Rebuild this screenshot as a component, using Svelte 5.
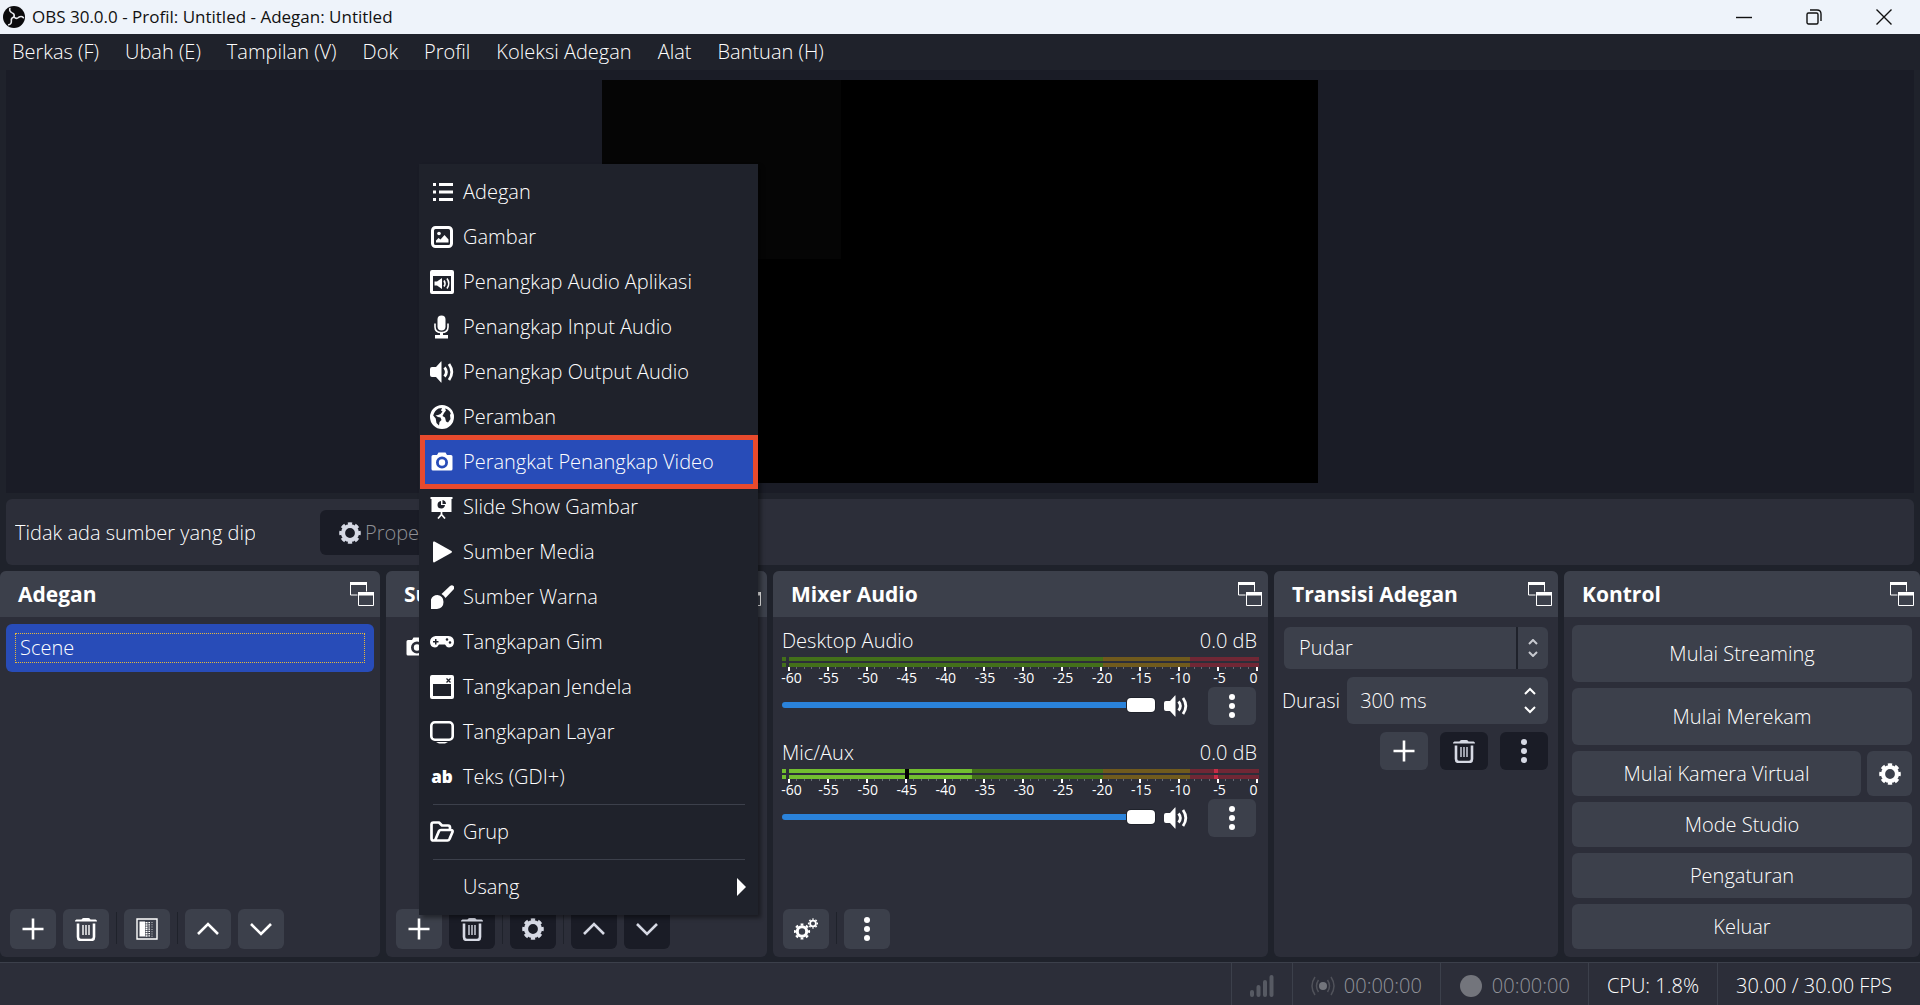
<script>
  const menus = ['Berkas (F)', 'Ubah (E)', 'Tampilan (V)', 'Dok', 'Profil', 'Koleksi Adegan', 'Alat', 'Bantuan (H)'];

  const icons = {
    plus: '<path d="M12 1.5v21M1.5 12h21" fill="none" stroke="currentColor" stroke-width="2.6"/>',
    trash: '<path d="M1 4.6C1 3 2 2.6 3.400 2.600H7.500Q8 1 9.500 1h5Q16 1 16.500 2.600h4.100C22 2.600 23 3 23 4.600z"/><path d="M4 6.500V20q0 3 3 3h10q3 0 3-3V6.500" fill="none" stroke="currentColor" stroke-width="2.600"/><path d="M9 8v10M12 8v10M15 8v10" stroke="currentColor" stroke-width="1.400"/>',
    gear: '<circle cx="12" cy="12" r="7" fill="none" stroke="currentColor" stroke-width="4.200"/><circle cx="12" cy="12" r="9.400" fill="none" stroke="currentColor" stroke-width="2.800" pathLength="16" stroke-dasharray="1.150 .850" stroke-dashoffset=".575"/>',
    gears: '<circle cx="8" cy="14.500" r="4.700" fill="none" stroke="currentColor" stroke-width="3"/><circle cx="8" cy="14.500" r="7" fill="none" stroke="currentColor" stroke-width="2.200" pathLength="16" stroke-dasharray="1 1" stroke-dashoffset=".5"/><circle cx="19" cy="6.500" r="2.900" fill="none" stroke="currentColor" stroke-width="1.800"/><circle cx="19" cy="6.500" r="4.400" fill="none" stroke="currentColor" stroke-width="1.400" pathLength="16" stroke-dasharray="1 1" stroke-dashoffset=".5"/>',
    up: '<path d="M2 17 12 7l10 10" fill="none" stroke="currentColor" stroke-width="2.600"/>',
    down: '<path d="M2 7l10 10L22 7" fill="none" stroke="currentColor" stroke-width="2.600"/>',
    dots: '<circle cx="12" cy="3" r="3"/><circle cx="12" cy="12" r="3"/><circle cx="12" cy="21" r="3"/>',
    filter: '<path d="M2 2h20v20H2z" fill="none" stroke="currentColor" stroke-width="1.400"/><path d="M4.500 4.500h5.500v15H4.500z"/><path d="M11.500 5v15" stroke="currentColor" stroke-width="2" stroke-dasharray="1.500 .7"/><path d="M14.200 5v15" stroke="currentColor" stroke-width="1.600" stroke-dasharray="1.200 1"/><path d="M17 5v15" stroke="currentColor" stroke-width="1.200" stroke-dasharray="1 1.300" opacity=".6"/>',
    float: '<path d="M7.500 13H.5V.5h16v9" fill="none" stroke="currentColor"/><path d="M0 0h17v3H0zM8 10h16v3.500H8z"/><path d="M8.500 10.500h15v13h-15z" fill="none" stroke="currentColor"/>',
    list: '<path d="M3 3h3v3H3zM3 10.500h3v3H3zM3 18h3v3H3zM9 3h14v3H9zM9 10.500h14v3H9zM9 18h14v3H9z"/>',
    image: '<rect x="2.500" y="2.500" width="19" height="19" rx="3" fill="none" stroke="currentColor" stroke-width="3"/><circle cx="9" cy="8.500" r="1.800"/><path d="M6 17.500v-2l2.500-2.500 2 1.500 4-4.500 4 4.500v3z"/>',
    appaudio: '<path fill-rule="evenodd" d="M2 0h20q2 0 2 2v20q0 2-2 2H2q-2 0-2-2V2q0-2 2-2zM3 6v15h18V6z"/><path d="M4.500 11.500H7l5-3.500v11l-5-3.500H4.500z"/><path d="M14 10.500q2 3 0 6M17 8.500q3.500 5 0 10" fill="none" stroke="currentColor" stroke-width="1.600"/>',
    mic: '<rect x="7.500" y=".5" width="8" height="15" rx="4"/><path d="M5 8.500V12q0 5.500 6.500 5.500T18 12V8.500" fill="none" stroke="currentColor" stroke-width="1.600"/><path d="M10 17.500h3V20h5v3.500H5V20h5z"/>',
    speaker: '<path d="M2 7h4l5-5.500q.5-.5.500.5v20q0 1-.5.500L6 17H2q-2 0-2-2V9q0-2 2-2z"/><path d="M14.500 7.500q3.800 4.500 0 9M19 4q5.600 8 0 16" fill="none" stroke="currentColor" stroke-width="2.800"/>',
    globe: '<path fill-rule="evenodd" d="M12 0a12 12 0 1 0 0 24 12 12 0 0 0 0-24zM8.500 3.500 12 3l-1 2.500 1.500 1-2 2.500L8 10l-2.500.5L8 12l2.500.5 1 2.500-2 2-.5 3.500L6.500 18l-.8-4.500-2.500-3Q4.500 5.500 8.500 3.500zM14 8l2-2.500-1-2q4 .8 5.800 5L20 10l.5 4-2.500 3.500-2-1-1-4-2.500-1.500z"/>',
    camera: '<path fill-rule="evenodd" d="M3 5h4l1.500-2.500h7L17 5h4q1.500 0 1.500 1.500V19q0 1.500-1.500 1.500H3Q1.500 20.500 1.500 19V6.500Q1.500 5 3 5zM12 6.500a6 6 0 1 0 0 12 6 6 0 0 0 0-12z"/><circle cx="12" cy="12.500" r="3.200"/>',
    slides: '<path fill-rule="evenodd" d="M.5 2h22v2h-1v13h-20V4h-1zM11 6q-3.500.5-3.500 4t4 3.500q3-.2 3.500-3.500h-4zM12.500 5v4H16q-.2-3.500-3.500-4z"/><path d="M11.500 17v2.500L8 23.500M11.500 19.500l3.500 4" fill="none" stroke="currentColor" stroke-width="1.700"/>',
    play: '<path d="M3 2.500q0-1.500 1.500-1l17 9.500q1 .8 0 1.800l-17 9.500Q3 23 3 21z"/>',
    brush: '<path d="M1 24v-9.500Q2.500 10 7.500 10q6 .8 6 7 0 6-6.500 7zM11.500 9 20 1q2-1.600 3.500 0t0 3.500L15.500 13Q14 10.500 11.500 9z"/>',
    gamepad: '<path fill-rule="evenodd" d="M5.500 6h13q5.500.6 5.500 6t-5 5.500q-2.500 0-4-3h-6q-1.500 3-4 3Q0 17 0 12t5.500-6zM5 9v2H3v1.500h2v2h1.500v-2h2V11h-2V9zM17 8.200a1.300 1.300 0 1 0 0 2.600 1.300 1.300 0 0 0 0-2.600zM20 11.200a1.300 1.300 0 1 0 0 2.600 1.300 1.300 0 0 0 0-2.600z"/>',
    window: '<path fill-rule="evenodd" d="M2 0h20q2 0 2 2v20q0 2-2 2H2q-2 0-2-2V2q0-2 2-2zM3 9v12h18V9z"/><path d="m16.500 3.500 4 4m0-4-4 4" stroke="#1f222b" stroke-width="1.300"/>',
    screen: '<rect x="1.300" y="2.300" width="21.400" height="17.400" rx="3.500" fill="none" stroke="currentColor" stroke-width="2.600"/><path d="M6 22h12l-3 1.500H9z"/>',
    text: '<text x="12" y="18" text-anchor="middle" font-family="Open Sans, sans-serif" font-weight="800" font-size="17">ab</text>',
    folder: '<path d="M5 20.500H3.500q-2 0-2-2v-14q0-2 2-2H9l3 3h6q2 0 2 2V10M5 20.500 9 11q.5-1 2-1h10q2 0 1.500 2l-3 7q-.7 1.500-2 1.500z" fill="none" stroke="currentColor" stroke-width="2.700" stroke-linejoin="round"/>',
    signal: '<rect x="0" y="16" width="4" height="7" rx="2"/><rect x="6.500" y="11" width="4" height="12" rx="2"/><rect x="13" y="6" width="4" height="17" rx="2"/><rect x="19.500" y="1" width="4" height="22" rx="2"/>',
    stream: '<circle cx="12" cy="12" r="4"/><path d="M7.500 6q-4 6 0 12M16.500 6q4 6 0 12M4 3q-6 9 0 18M20 3q6 9 0 18" fill="none" stroke="currentColor" stroke-width="1.500" opacity=".5"/>',
    record: '<circle cx="12" cy="12" r="11"/>'
  };

  const sources = [
    ['list', 'Adegan'],
    ['image', 'Gambar'],
    ['appaudio', 'Penangkap Audio Aplikasi'],
    ['mic', 'Penangkap Input Audio'],
    ['speaker', 'Penangkap Output Audio'],
    ['globe', 'Peramban'],
    ['camera', 'Perangkat Penangkap Video'],
    ['slides', 'Slide Show Gambar'],
    ['play', 'Sumber Media'],
    ['brush', 'Sumber Warna'],
    ['gamepad', 'Tangkapan Gim'],
    ['window', 'Tangkapan Jendela'],
    ['screen', 'Tangkapan Layar'],
    ['text', 'Teks (GDI+)']
  ];
  let selected = $state(6);

  const channels = [
    { id: 'desktop', name: 'Desktop Audio', live: false },
    { id: 'mic', name: 'Mic/Aux', live: true }
  ];
  const marks = Array.from({ length: 13 }, (_, i) => i * 5 - 60);
  const ticks = Array.from({ length: 61 }, (_, i) => i);
</script>

{#snippet icon(name)}
  <svg class="icon" viewBox="0 0 24 24" fill="currentColor" aria-hidden="true">{@html icons[name]}</svg>
{/snippet}

{#snippet tool(name, label, disabled = false)}
  <button class="tool" aria-label={label} {disabled}>{@render icon(name)}</button>
{/snippet}

{#snippet head(title)}
  <header class="dock-head">
    <h2>{title}</h2>
    <button class="bare" aria-label="Lepas dok {title}">{@render icon('float')}</button>
  </header>
{/snippet}

<div class="app">
  <header class="titlebar">
    <svg class="logo" viewBox="0 0 24 24" aria-hidden="true">
      <circle cx="12" cy="12" r="12" fill="#0b0b0d" />
      <g fill="none" stroke="#e6e8ec" stroke-width="1.700" stroke-linecap="round">
        {#each [0, 120, 240] as angle}
          <path d="M12 12Q13 8.500 10 7.500 6.500 6 7.500 2.800" transform="rotate({angle} 12 12)" />
        {/each}
      </g>
    </svg>
    <h1>OBS 30.0.0 - Profil: Untitled - Adegan: Untitled</h1>
    <div class="window-buttons">
      <button aria-label="Kecilkan"><svg viewBox="0 0 16 16"><path d="M0 8.500h16" /></svg></button>
      <button aria-label="Pulihkan"><svg viewBox="0 0 16 16"><rect x="1" y="4" width="11" height="11" rx="1.500" /><path d="M4 1h7q4 0 4 4v7" /></svg></button>
      <button aria-label="Tutup"><svg viewBox="0 0 16 16"><path d="m.5.5 15 15m0-15-15 15" /></svg></button>
    </div>
  </header>

  <nav class="menubar">
    {#each menus as item}
      <button>{item}</button>
    {/each}
  </nav>

  <main>
    <section class="preview" aria-label="Pratinjau">
      <div class="canvas"><div class="capture"></div></div>
    </section>

    <section class="context">
      <span class="source-name">Tidak ada sumber yang dipilih</span>
      <button class="props" disabled>{@render icon('gear')}Properti</button>
    </section>

    <div class="docks">
      <section class="dock">
        {@render head('Adegan')}
        <ul class="scenes">
          <li><button><span>Scene</span></button></li>
        </ul>
        <div class="toolbar">
          {@render tool('plus', 'Tambah adegan')}
          {@render tool('trash', 'Hapus adegan')}
          <i class="sep"></i>
          {@render tool('filter', 'Filter adegan')}
          <i class="sep"></i>
          {@render tool('up', 'Naikkan adegan')}
          {@render tool('down', 'Turunkan adegan')}
        </div>
      </section>

      <section class="dock">
        {@render head('Sumber')}
        <div class="source-row">{@render icon('camera')}</div>
        <div class="toolbar">
          <div class="add">
            {@render tool('plus', 'Tambah sumber')}
            <div class="popup" role="menu">
              {#each sources as [name, label], i}
                <button role="menuitem" class:selected={i === selected} onclick={() => (selected = i)}>
                  {@render icon(name)}{label}
                </button>
              {/each}
              <hr />
              <button role="menuitem">{@render icon('folder')}Grup</button>
              <hr />
              <button role="menuitem" class="submenu">
                <span>Usang</span>
                <svg class="arrow" viewBox="0 0 9 18" aria-hidden="true"><path d="M0 0l9 9-9 9z" fill="currentColor" /></svg>
              </button>
            </div>
          </div>
          {@render tool('trash', 'Hapus sumber', true)}
          <i class="sep"></i>
          {@render tool('gear', 'Properti sumber', true)}
          <i class="sep"></i>
          {@render tool('up', 'Naikkan sumber', true)}
          {@render tool('down', 'Turunkan sumber', true)}
        </div>
      </section>

      <section class="dock">
        {@render head('Mixer Audio')}
        <div class="mixer">
          {#each channels as ch}
            <div class="channel">
              <div class="channel-head">
                <label for={ch.id}>{ch.name}</label>
                <span>0.0 dB</span>
              </div>
              <svg class="meter" viewBox="0 0 477 14" preserveAspectRatio="none" shape-rendering="crispEdges" aria-hidden="true">
                {#each [0, 6] as y}
                  <rect x="0" {y} width="4" height="4" fill={ch.live ? '#72be30' : '#43701a'} />
                  <rect x="7" {y} width="314" height="4" fill="#43701a" />
                  <rect x="321" {y} width="87" height="4" fill="#705a1d" />
                  <rect x="408" {y} width="69" height="4" fill="#702735" />
                {/each}
                {#if ch.live}
                  <path d="M7 0h183v4H7zM7 6h183v4H7z" fill="#72be30" />
                  <path d="M123 0h4v10h-4z" fill="#000" />
                  <path d="M432 0h4v4h-4zM432 6h4v4h-4z" fill="#c72d47" />
                {/if}
                {#each ticks as t}
                  {#if t % 5 === 0}
                    <rect x={6 + t * 7.8} y="10" width="2" height="4" fill="#fff" />
                  {:else}
                    <rect x={6 + t * 7.8} y="10" width="1" height="2" fill="#666a75" />
                  {/if}
                {/each}
              </svg>
              <div class="scale">
                {#each marks as m}<span>{m}</span>{/each}
              </div>
              <div class="channel-controls">
                <input id={ch.id} type="range" min="0" max="100" value="100" />
                <button class="bare" aria-label="Bisukan {ch.name}">{@render icon('speaker')}</button>
                <button class="tool wide" aria-label="Opsi {ch.name}">{@render icon('dots')}</button>
              </div>
            </div>
          {/each}
        </div>
        <div class="toolbar">
          {@render tool('gears', 'Properti audio lanjutan')}
          <i class="sep"></i>
          {@render tool('dots', 'Menu mixer')}
        </div>
      </section>

      <section class="dock">
        {@render head('Transisi Adegan')}
        <div class="transition">
          <div class="combo">
            <select aria-label="Transisi"><option>Pudar</option></select>
            <svg viewBox="0 0 10 18" aria-hidden="true"><path d="m1 5 4-4 4 4M1 13l4 4 4-4" /></svg>
          </div>
          <div class="duration">
            <label for="duration">Durasi</label>
            <div class="spin">
              <input id="duration" type="text" value="300 ms" />
              <div class="steps">
                <button aria-label="Tambah durasi"><svg viewBox="0 0 12 8"><path d="m1 7 5-5 5 5" /></svg></button>
                <button aria-label="Kurangi durasi"><svg viewBox="0 0 12 8"><path d="m1 1 5 5 5-5" /></svg></button>
              </div>
            </div>
          </div>
          <div class="transition-tools">
            <button class="tool wide" aria-label="Tambah transisi">{@render icon('plus')}</button>
            <button class="tool wide" aria-label="Hapus transisi" disabled>{@render icon('trash')}</button>
            <button class="tool wide" aria-label="Opsi transisi" disabled>{@render icon('dots')}</button>
          </div>
        </div>
      </section>

      <section class="dock">
        {@render head('Kontrol')}
        <div class="controls">
          <button class="big">Mulai Streaming</button>
          <button class="big">Mulai Merekam</button>
          <div class="vcam">
            <button>Mulai Kamera Virtual</button>
            <button aria-label="Konfigurasi kamera virtual">{@render icon('gear')}</button>
          </div>
          <button>Mode Studio</button>
          <button>Pengaturan</button>
          <button>Keluar</button>
        </div>
      </section>
    </div>
  </main>

  <footer class="statusbar">
    <div class="dim">{@render icon('signal')}</div>
    <div class="idle">{@render icon('stream')}<span>00:00:00</span></div>
    <div class="idle">{@render icon('record')}<span>00:00:00</span></div>
    <div>CPU: 1.8%</div>
    <div class="fps">30.00 / 30.00 FPS</div>
  </footer>
</div>

<style>
  :global(body) {
    background: #1f222b;
  }

  .app {
    --window: #1f222b;
    --panel: #2c2e39;
    --button: #3c404b;
    --dark: #1a1c26;
    --accent: #284cb8;
    display: flex;
    flex-direction: column;
    min-height: 100vh;
    background: var(--window);
    color: #fff;
    font-family: 'Open Sans', 'Noto Sans', sans-serif;
    font-size: 20px;
    font-weight: 300;
    line-height: 28px;
  }

  .app * { box-sizing: border-box; }

  h1, h2, ul {
    margin: 0;
    padding: 0;
    list-style: none;
  }

  button, input, select {
    margin: 0;
    padding: 0;
    border: 0;
    background: none;
    color: inherit;
    font: inherit;
  }

  .icon {
    width: 24px;
    height: 24px;
    flex: none;
    display: block;
  }

  .bare { display: flex; }

  /* Title bar */
  .titlebar {
    display: flex;
    align-items: center;
    height: 34px;
    padding-left: 3px;
    background: #eef3fa;
    color: #111;
  }

  .logo {
    width: 22px;
    height: 22px;
    margin-right: 7px;
  }

  h1 {
    flex: 1;
    font-size: 17px;
    font-weight: 400;
  }

  .window-buttons {
    display: flex;
    padding-right: 1px;
  }

  .window-buttons button {
    display: grid;
    place-items: center;
    width: 70px;
    height: 34px;
  }

  .window-buttons svg {
    width: 16px;
    height: 16px;
    fill: none;
    stroke: #111;
    stroke-width: 1.4;
  }

  /* Menu bar */
  .menubar {
    display: flex;
    gap: 26px;
    height: 36px;
    padding: 0 12px;
    align-items: center;
  }

  main {
    flex: 1;
    display: flex;
    flex-direction: column;
    gap: 6px;
  }

  .preview {
    flex: 1 0 300px;
    display: flex;
    justify-content: center;
    margin: 0 6px;
    padding: 10px;
    background: var(--dark);
  }

  .canvas {
    aspect-ratio: 16 / 9;
    background: #000;
  }

  .capture {
    width: 33.4%;
    height: 44.5%;
    background: #050505;
  }

  .context {
    display: flex;
    align-items: center;
    height: 66px;
    margin: 0 6px;
    padding: 1px 9px 0;
    background: var(--panel);
    border-radius: 6px;
  }

  .source-name {
    width: 240px;
    margin-right: 65px;
    overflow: hidden;
    white-space: nowrap;
  }

  .props {
    display: flex;
    align-items: center;
    gap: 3px;
    height: 45px;
    padding: 0 18px;
    border-radius: 6px;
    background: var(--dark);
    color: #8f9095;
  }

  .props .icon { color: #d6d9e4; }

  /* Docks */
  .docks {
    display: grid;
    grid-template-columns: 380fr 381fr 495fr 284fr 356fr;
    gap: 6px;
  }

  .dock {
    display: flex;
    flex-direction: column;
    min-width: 0;
    background: var(--panel);
    border-radius: 6px;
  }

  .dock-head {
    display: flex;
    align-items: center;
    justify-content: space-between;
    height: 46px;
    padding: 0 6px 0 18px;
    background: var(--button);
    border-radius: 6px 6px 0 0;
  }

  h2 {
    font-size: 21px;
    font-weight: 700;
  }

  .toolbar {
    display: flex;
    gap: 7px;
    margin-top: auto;
    padding: 0 10px 8px;
  }

  .sep {
    width: 1px;
    height: 32px;
    margin-top: 3px;
    background: var(--window);
  }

  .tool {
    display: grid;
    place-items: center;
    width: 46px;
    height: 40px;
    border-radius: 6px;
    background: var(--button);
  }

  .tool.wide {
    width: 48px;
    height: 38px;
  }

  .tool:disabled {
    background: var(--dark);
    color: #d6d9e4;
  }

  .scenes { padding: 7px 6px; }

  .scenes button {
    display: block;
    width: 100%;
    padding: 9px;
    border-radius: 6px;
    background: var(--accent);
    text-align: left;
  }

  .scenes span {
    display: block;
    padding: 0 4px;
    border: 1px dotted #e6b93c;
  }

  .source-row { padding: 18px 19px; }

  /* Add-source popup */
  .add { position: relative; }

  .popup {
    position: absolute;
    left: 23px;
    bottom: calc(100% - 6px);
    z-index: 10;
    display: grid;
    gap: 1px;
    width: 339px;
    padding: 6px 5px 6px 6px;
    background: var(--window);
    box-shadow: 3px 3px 4px rgba(0, 0, 0, 0.4);
  }

  .popup button {
    display: flex;
    align-items: center;
    gap: 9px;
    height: 44px;
    padding: 0 7px 0 5px;
    text-align: left;
    white-space: nowrap;
  }

  .popup .selected {
    background: var(--accent);
    outline: 5px solid #e84a2d;
  }

  .popup hr {
    width: auto;
    height: 1px;
    margin: 4px 8px;
    border: 0;
    background: var(--button);
  }

  .popup .submenu {
    justify-content: space-between;
    padding-left: 38px;
  }

  .arrow {
    width: 9px;
    height: 18px;
  }

  /* Mixer */
  .mixer {
    display: grid;
    gap: 14px;
    padding: 10px 9px 0;
  }

  .channel-head {
    display: flex;
    justify-content: space-between;
    padding-right: 2px;
  }

  .meter {
    display: block;
    width: 100%;
    height: 14px;
    margin-top: 2px;
  }

  .scale {
    display: grid;
    grid-template-columns: repeat(13, minmax(0, 1fr));
    margin: 0 -19px 2px -12px;
    font-size: 14px;
    font-weight: 400;
    line-height: 14px;
    text-align: center;
  }

  .scale span:first-child { padding-left: 4px; }
  .scale span:last-child { padding-right: 10px; }

  .channel-controls {
    display: flex;
    align-items: center;
    padding-right: 3px;
  }

  .channel-controls .bare { margin: 0 20px 0 9px; }

  input[type='range'] {
    appearance: none;
    flex: 1;
    min-width: 0;
    height: 16px;
    margin-bottom: 3px;
  }

  input[type='range']::-webkit-slider-runnable-track {
    height: 6px;
    border-radius: 3px;
    background: #2a82da;
  }

  input[type='range']::-webkit-slider-thumb {
    appearance: none;
    width: 28px;
    height: 14px;
    margin-top: -4px;
    border: 0;
    border-radius: 4px;
    background: #fff;
    box-shadow: 0 0 0 1px var(--window);
  }

  /* Transitions */
  .transition {
    display: grid;
    grid-template-columns: minmax(0, 1fr);
    gap: 8px;
    padding: 10px;
  }

  .combo {
    display: grid;
    grid-template-columns: minmax(0, 1fr) 30px;
    align-items: center;
    justify-items: center;
    border-radius: 6px;
    background: var(--button);
  }

  .combo select {
    appearance: none;
    width: 100%;
    height: 42px;
    padding-left: 15px;
    border-right: 2px solid var(--window);
  }

  .combo svg {
    width: 10px;
    height: 18px;
    fill: none;
    stroke: #c8cad0;
    stroke-width: 2;
  }

  .duration {
    display: flex;
    align-items: center;
    justify-content: space-between;
    gap: 7px;
    margin-left: -2px;
  }

  .spin {
    display: flex;
    flex: 1;
    min-width: 0;
    height: 47px;
    padding: 0 12px 0 13px;
    border-radius: 6px;
    background: var(--button);
  }

  .spin input {
    flex: 1;
    min-width: 0;
  }

  .steps {
    display: grid;
    align-content: space-evenly;
  }

  .steps button {
    display: block;
    line-height: 0;
  }

  .steps svg {
    width: 12px;
    height: 8px;
    fill: none;
    stroke: #fff;
    stroke-width: 2;
  }

  .transition-tools {
    display: flex;
    justify-content: flex-end;
    gap: 12px;
  }

  /* Controls */
  .controls {
    display: grid;
    gap: 6px;
    padding: 8px;
  }

  .controls button {
    height: 45px;
    border-radius: 6px;
    background: var(--button);
  }

  .controls .big { height: 57px; }

  .vcam {
    display: grid;
    grid-template-columns: 1fr 45px;
    gap: 6px;
  }

  .vcam button {
    display: grid;
    place-items: center;
  }

  /* Status bar */
  .statusbar {
    display: flex;
    justify-content: flex-end;
    height: 43px;
    margin-top: 5px;
    border-top: 1px solid var(--button);
    background: var(--panel);
  }

  .statusbar div {
    display: flex;
    align-items: center;
    gap: 9px;
    padding: 4px 18px 0;
    border-left: 1px solid var(--button);
  }

  .statusbar .dim { color: #575a63; }
  .statusbar .idle { color: #92949b; }
  .statusbar .idle .icon { color: #73757c; }
  .statusbar .fps { padding-right: 28px; }
</style>
